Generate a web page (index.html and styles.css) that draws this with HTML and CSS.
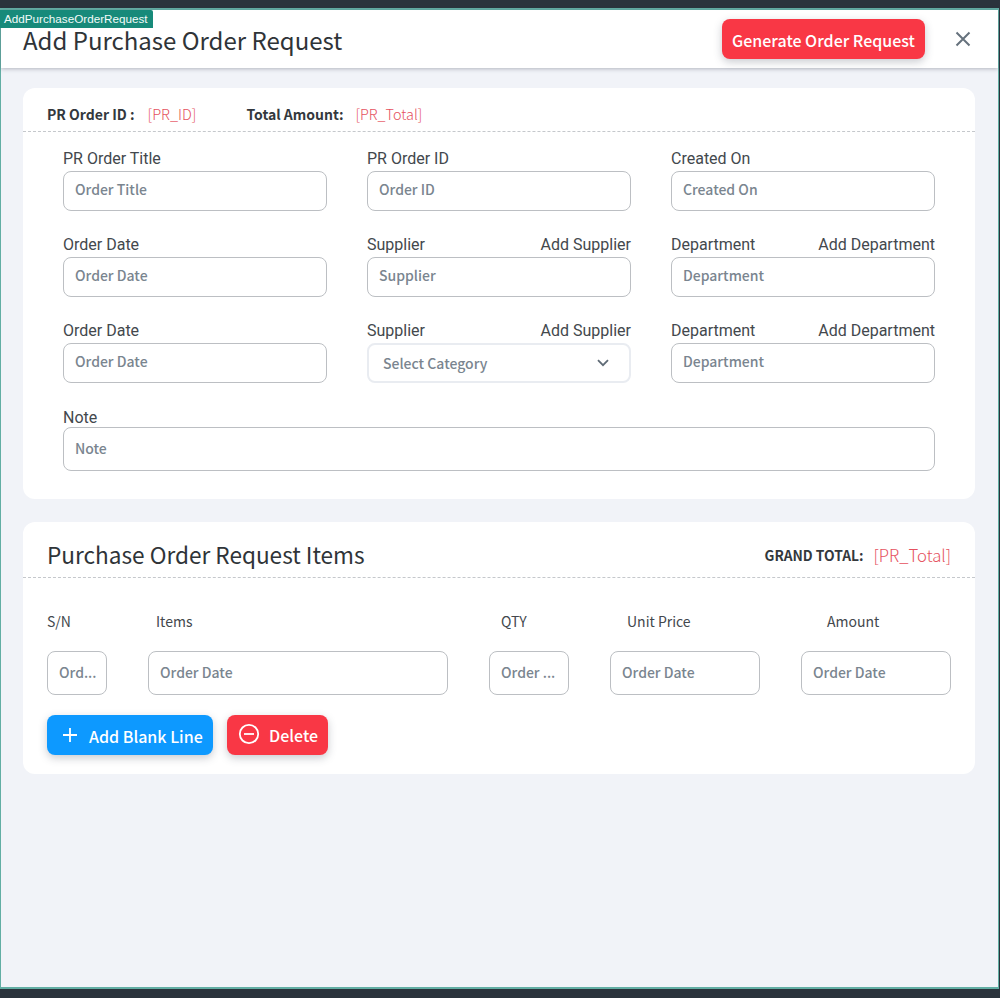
FILE: index.html
```html
<!DOCTYPE html>
<html lang="en">
<head>
<meta charset="utf-8">
<title>Add Purchase Order Request</title>
<link rel="stylesheet" href="styles.css">
</head>
<body>
<div class="modal">
  <span class="badge">AddPurchaseOrderRequest</span>
  <header class="topbar">
    <h1 class="title">Add Purchase Order Request</h1>
    <div class="top-actions">
      <button class="btn btn-red btn-generate" type="button">Generate Order Request</button>
      <svg class="close" viewBox="0 0 16 16" width="16" height="16" aria-label="Close"><path d="M1.5 1.5l13 13M14.5 1.5l-13 13" fill="none" stroke="#66727d" stroke-width="2"/></svg>
    </div>
  </header>
  <main class="content">
    <section class="card card-form">
      <div class="card-head summary">
        <span class="sum-label">PR Order ID :</span><span class="sum-value sum-first">[PR_ID]</span>
        <span class="sum-label">Total Amount:</span><span class="sum-value sum-last">[PR_Total]</span>
      </div>
      <div class="form-grid">
        <div class="field"><div class="label-row"><label>PR Order Title</label></div><div class="input">Order Title</div></div>
        <div class="field"><div class="label-row"><label>PR Order ID</label></div><div class="input">Order ID</div></div>
        <div class="field"><div class="label-row"><label>Created On</label></div><div class="input">Created On</div></div>

        <div class="field"><div class="label-row"><label>Order Date</label></div><div class="input">Order Date</div></div>
        <div class="field"><div class="label-row"><label>Supplier</label><label>Add Supplier</label></div><div class="input">Supplier</div></div>
        <div class="field"><div class="label-row"><label>Department</label><label>Add Department</label></div><div class="input">Department</div></div>

        <div class="field"><div class="label-row"><label>Order Date</label></div><div class="input">Order Date</div></div>
        <div class="field"><div class="label-row"><label>Supplier</label><label>Add Supplier</label></div>
          <div class="select"><span>Select Category</span>
            <svg viewBox="0 0 12 8" width="12" height="8"><path d="M1 1.2l5 5 5-5" fill="none" stroke="#5f6b76" stroke-width="1.8"/></svg>
          </div>
        </div>
        <div class="field"><div class="label-row"><label>Department</label><label>Add Department</label></div><div class="input">Department</div></div>

        <div class="field field-wide"><div class="label-row label-note"><label>Note</label></div><div class="input input-note">Note</div></div>
      </div>
    </section>

    <section class="card card-items">
      <div class="card-head items-head">
        <h2 class="items-title">Purchase Order Request Items</h2>
        <div class="grand"><span class="grand-label">GRAND TOTAL:</span><span class="grand-value">[PR_Total]</span></div>
      </div>
      <div class="items-body">
        <div class="items-row items-labels">
          <span class="col col-sn">S/N</span>
          <span class="col col-item">Items</span>
          <span class="col col-qty">QTY</span>
          <span class="col col-price">Unit Price</span>
          <span class="col col-amount">Amount</span>
        </div>
        <div class="items-row">
          <div class="col col-sn cell">Ord...</div>
          <div class="col col-item cell">Order Date</div>
          <div class="col col-qty cell">Order ...</div>
          <div class="col col-price cell">Order Date</div>
          <div class="col col-amount cell">Order Date</div>
        </div>
        <div class="item-actions">
          <button class="btn btn-blue" type="button">
            <svg viewBox="0 0 16 16" width="16" height="16"><path d="M8 1v14M1 8h14" fill="none" stroke="#fff" stroke-width="1.8"/></svg>
            <span class="btn-text">Add Blank Line</span>
          </button>
          <button class="btn btn-red btn-delete" type="button">
            <svg viewBox="0 0 22 22" width="22" height="22"><circle cx="11" cy="11" r="9.2" fill="none" stroke="#fff" stroke-width="1.8"/><path d="M6 11h10" stroke="#fff" stroke-width="1.8"/></svg>
            <span class="btn-text">Delete</span>
          </button>
        </div>
      </div>
    </section>
  </main>
</div>
</body>
</html>
```

FILE: styles.css
```css
* { box-sizing: border-box; }
html, body { margin: 0; height: 100%; }
body {
  background: #2a333c;
  padding: 8px 0 9px;
  height: 998px;
  overflow: hidden;
  font-family: "Noto Sans CJK SC", "Noto Sans", sans-serif;
  color: #2b3035;
}
.modal {
  position: relative;
  height: 981px;
  margin: 0 1px 0 0;
  background: #f1f3f8;
  border: 2px solid #62aea4;
  border-left-width: 1px;
  border-right-width: 1px;
  display: flex;
  flex-direction: column;
}
.badge {
  position: absolute;
  left: -1px;
  top: 0;
  width: 153px;
  height: 18px;
  background: #178a7a;
  color: #f2fbf9;
  font: 11.7px/18px "Liberation Sans", sans-serif;
  padding-left: 4px;
  white-space: nowrap;
  border-radius: 0 2px 0 0;
  z-index: 2;
}
.topbar {
  height: 58px;
  flex: none;
  background: #fff;
  box-shadow: 0 1px 4px rgba(60, 70, 85, 0.35);
  display: flex;
  align-items: center;
  justify-content: space-between;
  padding: 0 27px 0 22px;
}
.title {
  margin: 0;
  font-size: 24px;
  font-weight: 400;
  line-height: 34px;
  padding-top: 2px;
  color: #2f3438;
}
.top-actions { display: flex; align-items: center; gap: 30px; }
.btn {
  border: 0;
  border-radius: 8px;
  height: 40px;
  font-family: inherit;
  font-size: 16px;
  font-weight: 500;
  color: #fff;
  display: inline-flex;
  align-items: center;
  padding: 0 10px;
  box-shadow: 0 3px 8px rgba(60, 70, 85, 0.28);
}
.btn-text { padding-top: 2px; }
.btn-red { background: #f93745; }
.btn-blue { background: #0d99ff; gap: 11px; width: 166px; padding: 0 0 0 15px; }
.btn-delete { gap: 9px; width: 101px; padding: 0 0 2px 11px; }
.btn-generate { width: 203px; justify-content: center; padding: 2px 0 0; }
.close { display: block; }
.content {
  flex: 1;
  padding: 20px 23px 0 22px;
  display: flex;
  flex-direction: column;
  gap: 23px;
}
.card { background: #fff; border-radius: 12px; }
.card-form { height: 411px; }
.card-items { height: 252px; }
.card-head {
  border-bottom: 1px dashed #c5c8cc;
  display: flex;
  align-items: center;
}
.summary { height: 44px; padding: 9px 24px 0; font-size: 14px; line-height: 20px; }
.sum-label { font-weight: 700; color: #33383d; }
.sum-value { color: #e5515e; margin-left: 13px; font-weight: 300; font-size: 14.6px; }
.sum-first { margin-right: 50px; }
.sum-last { margin-left: 12px; font-size: 14.4px; }
.form-grid {
  display: grid;
  grid-template-columns: repeat(3, 264px);
  column-gap: 40px;
  row-gap: 24px;
  padding: 17px 40px 0;
}
.field-wide { grid-column: 1 / -1; }
.label-row {
  display: flex;
  justify-content: space-between;
  height: 22px;
  font: 16px/20px Roboto, sans-serif;
  color: #43484d;
}
.label-note { height: 20px; line-height: 22px; }
.input, .select {
  height: 40px;
  background: #fff;
  border: 1px solid #bcbfc3;
  border-radius: 8px;
  padding: 0 11px 5px;
  display: flex;
  align-items: center;
  font-size: 14px;
  font-weight: 500;
  color: #7a858f;
}
.input-note { height: 44px; padding-bottom: 3px; }
.select {
  border-color: #e9ecf1;
  border-width: 2px;
  justify-content: space-between;
  padding: 0 20px 0 14px;
}
.items-head {
  height: 56px;
  justify-content: space-between;
  padding: 0 24px;
}
.items-title { margin: 0; font-size: 22.6px; font-weight: 400; line-height: 30px; color: #2f3438; padding-top: 10px; }
.grand { display: flex; align-items: center; gap: 10px; padding-top: 10px; }
.grand-label { font-size: 13.8px; font-weight: 700; color: #33383d; padding-top: 1px; }
.grand-value { font-size: 16.7px; font-weight: 300; color: #e5515e; }
.items-body { padding: 31px 24px 0; }
.items-row { display: flex; gap: 41px; }
.items-labels { height: 42px; font-size: 14px; line-height: 24px; color: #43484d; }
.col-sn { width: 60px; }
.col-item { width: 300px; }
.col-qty { width: 80px; }
.col-price, .col-amount { width: 150px; }
.items-labels .col-item { padding-left: 8px; }
.items-labels .col-qty { padding-left: 12px; }
.items-labels .col-price { padding-left: 17px; }
.items-labels .col-amount { padding-left: 26px; }
.cell {
  height: 44px;
  border: 1px solid #bcbfc3;
  border-radius: 8px;
  padding: 0 11px 2px;
  display: flex;
  align-items: center;
  font-size: 14px;
  font-weight: 500;
  color: #7a858f;
  white-space: nowrap;
}
.item-actions { display: flex; gap: 14px; margin-top: 20px; }
```
